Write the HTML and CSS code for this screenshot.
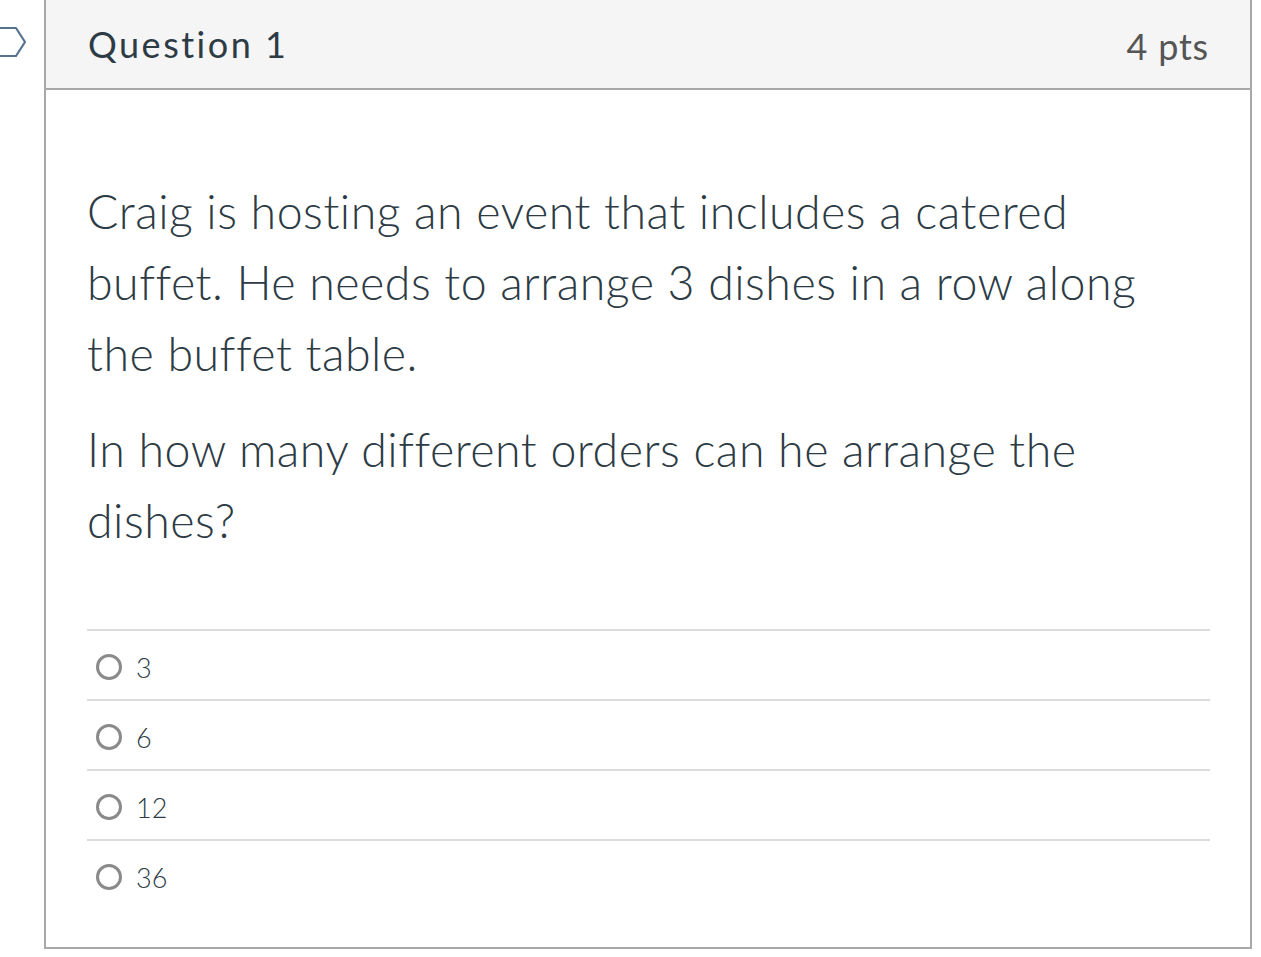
FILE: index.html
```html
<!DOCTYPE html>
<html>
<head>
<meta charset="utf-8">
<link rel="stylesheet" href="styles.css">
</head>
<body>
<div class="page">
  <svg class="flag" width="30" height="34" viewBox="0 0 30 34">
    <path d="M-4 2 H16 L25 16 L16 30 H-4" fill="none" stroke="#56738d" stroke-width="2.2" stroke-linejoin="round"/>
  </svg>
  <div class="card">
    <div class="card-header">
      <h2 class="q-title">Question 1</h2>
      <span class="q-pts">4 pts</span>
    </div>
    <div class="card-body">
      <div class="q-text">
        <p>Craig is hosting an event that includes a catered buffet. He needs to arrange 3 dishes in a row along the buffet table.</p>
        <p>In how many different orders can he arrange the dishes?</p>
      </div>
      <div class="answers">
        <label class="answer"><span class="radio"></span><span class="ans-text">3</span></label>
        <label class="answer"><span class="radio"></span><span class="ans-text">6</span></label>
        <label class="answer"><span class="radio"></span><span class="ans-text">12</span></label>
        <label class="answer"><span class="radio"></span><span class="ans-text">36</span></label>
      </div>
    </div>
  </div>
</div>
</body>
</html>
```
FILE: styles.css
```css
html, body {
  margin: 0;
  padding: 0;
  background: #fff;
  font-family: Lato, "Open Sans", sans-serif;
  color: #2d3b45;
}
.page {
  position: relative;
  width: 1261px;
  height: 957px;
  overflow: hidden;
}
.flag {
  position: absolute;
  left: 0;
  top: 26px;
}
.card {
  margin-left: 44px;
  width: 1204px;
  border-left: 2px solid #a8a8a8;
  border-right: 2px solid #a8a8a8;
  border-bottom: 2px solid #a8a8a8;
  box-sizing: content-box;
}
.card-header {
  height: 88px;
  background: #f5f5f5;
  border-bottom: 2px solid #a8a8a8;
  display: flex;
  align-items: center;
  justify-content: space-between;
  padding: 0 42px 0 42px;
}
.q-title {
  margin: 0;
  font-size: 36px;
  font-weight: 400;
  letter-spacing: 2.5px;
  color: #2d3b45;
  position: relative;
  top: 0;
}
.q-pts {
  font-size: 36px;
  font-weight: 400;
  letter-spacing: 0.8px;
  color: #555;
  position: relative;
  top: 2px;
  margin-right: -1px;
}
.card-body {
  padding: 86px 40px 38px 41px;
}
.q-text {
  padding-right: 50px;
}
.q-text p {
  margin: 0 0 25px 0;
  font-size: 46.5px;
  font-weight: 300;
  letter-spacing: 0.5px;
  line-height: 71px;
  color: #2d3b45;
}
.answers {
  margin-top: 73px;
}
.answer {
  display: flex;
  align-items: center;
  box-sizing: border-box;
  height: 70px;
  padding-top: 4px;
  border-top: 2px solid #dcdcdc;
}
.radio {
  width: 20px;
  height: 20px;
  border: 3.5px solid #8a8a8a;
  border-radius: 50%;
  margin-left: 9px;
  margin-right: 14px;
  flex: none;
}
.ans-text {
  font-size: 27px;
  font-weight: 300;
  color: #2d3b45;
}
```
